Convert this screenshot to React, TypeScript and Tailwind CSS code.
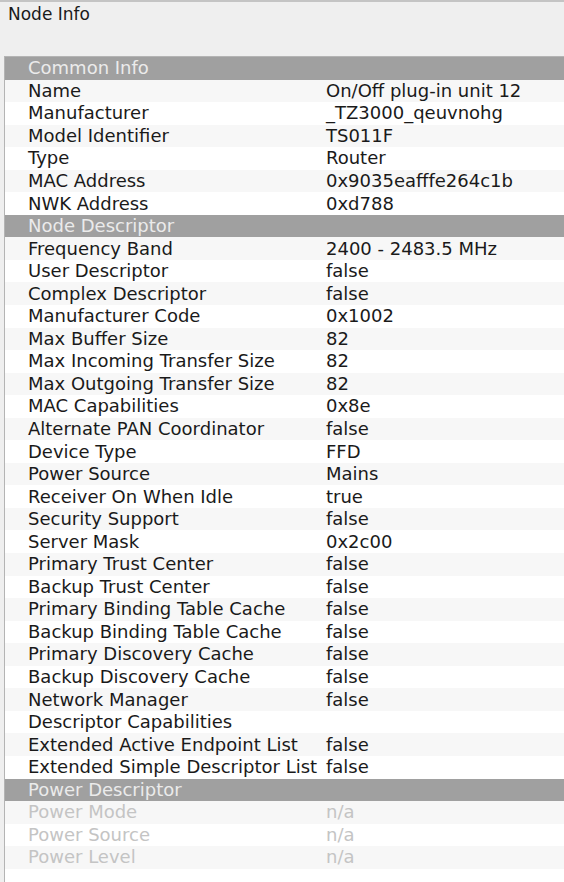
type Row = { label: string; value?: string; header?: boolean; disabled?: boolean };

const rows: Row[] = [
  { label: 'Common Info', header: true },
  { label: 'Name', value: 'On/Off plug-in unit 12' },
  { label: 'Manufacturer', value: '_TZ3000_qeuvnohg' },
  { label: 'Model Identifier', value: 'TS011F' },
  { label: 'Type', value: 'Router' },
  { label: 'MAC Address', value: '0x9035eafffe264c1b' },
  { label: 'NWK Address', value: '0xd788' },
  { label: 'Node Descriptor', header: true },
  { label: 'Frequency Band', value: '2400 - 2483.5 MHz' },
  { label: 'User Descriptor', value: 'false' },
  { label: 'Complex Descriptor', value: 'false' },
  { label: 'Manufacturer Code', value: '0x1002' },
  { label: 'Max Buffer Size', value: '82' },
  { label: 'Max Incoming Transfer Size', value: '82' },
  { label: 'Max Outgoing Transfer Size', value: '82' },
  { label: 'MAC Capabilities', value: '0x8e' },
  { label: 'Alternate PAN Coordinator', value: 'false' },
  { label: 'Device Type', value: 'FFD' },
  { label: 'Power Source', value: 'Mains' },
  { label: 'Receiver On When Idle', value: 'true' },
  { label: 'Security Support', value: 'false' },
  { label: 'Server Mask', value: '0x2c00' },
  { label: 'Primary Trust Center', value: 'false' },
  { label: 'Backup Trust Center', value: 'false' },
  { label: 'Primary Binding Table Cache', value: 'false' },
  { label: 'Backup Binding Table Cache', value: 'false' },
  { label: 'Primary Discovery Cache', value: 'false' },
  { label: 'Backup Discovery Cache', value: 'false' },
  { label: 'Network Manager', value: 'false' },
  { label: 'Descriptor Capabilities', value: '' },
  { label: 'Extended Active Endpoint List', value: 'false' },
  { label: 'Extended Simple Descriptor List', value: 'false' },
  { label: 'Power Descriptor', header: true },
  { label: 'Power Mode', value: 'n/a', disabled: true },
  { label: 'Power Source', value: 'n/a', disabled: true },
  { label: 'Power Level', value: 'n/a', disabled: true },
];

export default function App() {
  let stripe = 0;
  return (
    <div
      className="w-[564px] h-[882px] bg-[#efefef] border-t-2 border-[#c4c4c4] flex flex-col overflow-hidden text-[18px] text-[#1a1a1a]"
      style={{ fontFamily: '"DejaVu Sans", sans-serif' }}
    >
      {/* Title */}
      <div className="h-[54px] pl-2 pt-[2px] leading-[20px] text-[17px]">Node Info</div>

      {/* Table */}
      <div className="flex-1 ml-1 bg-white border-l border-t border-[#b4b4b4]">
        {rows.map((r, i) => {
          if (r.header) {
            stripe = 0;
            return (
              <div key={i} className="h-[22.55px] bg-[#a0a0a0] text-[#ebebeb] pl-[23px] flex items-center leading-none">
                {r.label}
              </div>
            );
          }
          const alt = stripe++ % 2 === 0;
          return (
            <div
              key={i}
              className={`h-[22.55px] flex items-center leading-none ${alt ? 'bg-[#f7f7f7]' : 'bg-white'} ${
                r.disabled ? 'text-[#c4c4c4]' : ''
              }`}
            >
              <div className="w-[321px] shrink-0 pl-[23px] whitespace-nowrap">{r.label}</div>
              <div className="whitespace-nowrap">{r.value}</div>
            </div>
          );
        })}
      </div>
    </div>
  );
}
